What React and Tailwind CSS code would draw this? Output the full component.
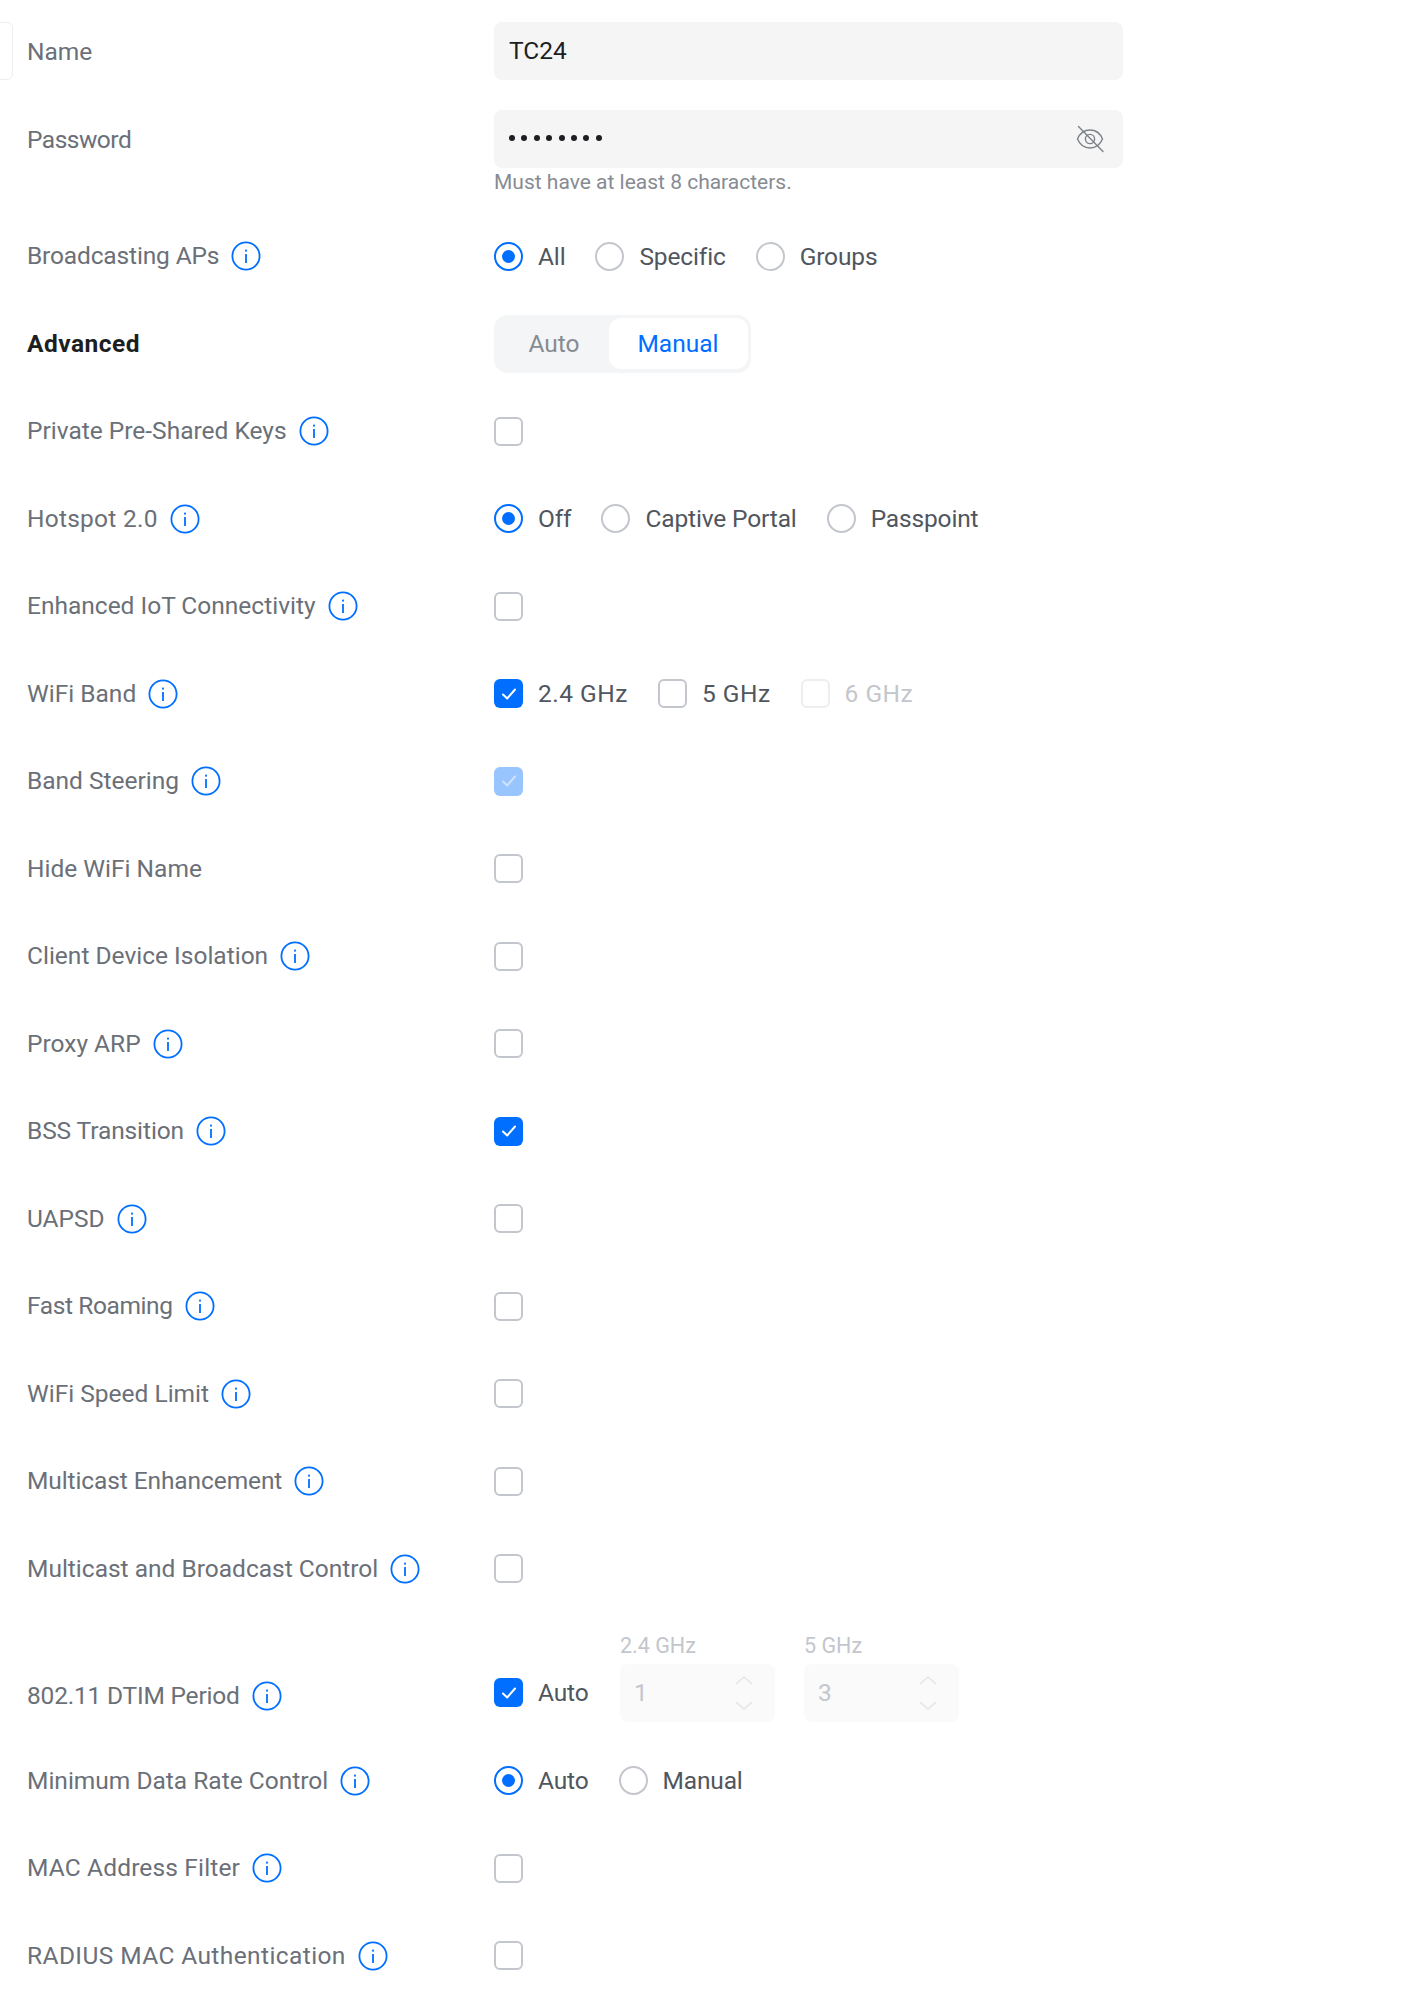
const labelFont = "font-['Roboto','Noto_Sans',sans-serif]";

const InfoIcon = () => (
  <svg width="30" height="30" viewBox="0 0 30 30" fill="none" className="shrink-0">
    <circle cx="15" cy="15" r="13.6" stroke="#006fff" strokeWidth="1.8" />
    <rect x="14.1" y="13" width="1.8" height="9" fill="#006fff" />
    <rect x="14.1" y="8.6" width="1.8" height="2" fill="#006fff" />
  </svg>
);

const EyeSlash = () => (
  <svg width="30" height="30" viewBox="0 0 30 30" fill="none">
    <path d="M2.5 15 C5 9 9.5 6 15 6 C20.5 6 25 9 27.5 15 C25 21 20.5 24 15 24 C9.5 24 5 21 2.5 15 Z" stroke="#7d8288" strokeWidth="1.4" />
    <circle cx="15" cy="15" r="4.6" stroke="#7d8288" strokeWidth="1.4" />
    <path d="M3.5 2.5 L28 27.5" stroke="#7d8288" strokeWidth="1.4" strokeLinecap="round" />
  </svg>
);

const Check = ({ className }) => (
  <svg width="16" height="14" viewBox="0 0 16 14" fill="none" className={className}>
    <path d="M2 7.5 L6.2 11.5 L14 2.5" stroke="currentColor" strokeWidth="2" strokeLinecap="round" strokeLinejoin="round" />
  </svg>
);

const Checkbox = ({ state = 'off' }) => {
  if (state === 'on') {
    return (
      <span className="flex h-[29px] w-[29px] shrink-0 items-center justify-center rounded-[6px] bg-[#006fff] text-white">
        <Check />
      </span>
    );
  }
  if (state === 'onDisabled') {
    return (
      <span className="flex h-[29px] w-[29px] shrink-0 items-center justify-center rounded-[6px] bg-[#99c5ff] text-[#cfe2ff]">
        <Check />
      </span>
    );
  }
  return (
    <span className={`block h-[29px] w-[29px] shrink-0 rounded-[6px] border-2 ${state === 'disabled' ? 'border-[#eceef0]' : 'border-[#c3c6cc]'}`} />
  );
};

const Radio = ({ on }) =>
  on ? (
    <span className="flex h-[29px] w-[29px] shrink-0 items-center justify-center rounded-full border-2 border-[#006fff]">
      <span className="h-[13px] w-[13px] rounded-full bg-[#006fff]" />
    </span>
  ) : (
    <span className="block h-[29px] w-[29px] shrink-0 rounded-full border-2 border-[#c3c6cc]" />
  );

const Option = ({ control, text, muted, wide }) => (
  <div className="flex items-center gap-[15px]">
    {control}
    <span className={`pt-[1px] ${wide ? 'tracking-[0.5px]' : 'tracking-[-0.15px]'} ${muted ? 'text-[#c3c6cc]' : 'text-[#50565e]'}`}>{text}</span>
  </div>
);

const RadioGroup = ({ options }) => (
  <div className="flex items-center gap-[30px]">
    {options.map((o, i) => (
      <Option key={o} control={<Radio on={i === 0} />} text={o} />
    ))}
  </div>
);

// labelClass nudges single labels, the original font is not installed
const Row = ({ label, info = true, children, bold, labelClass = '' }) => (
  <div className="flex h-[58px] items-center">
    <div className={`flex w-[494px] shrink-0 items-center gap-[12px] pl-[27px] ${bold ? 'font-bold tracking-[0.5px] text-[#1c1e21]' : 'text-[#6b7078]'}`}>
      <span className={labelClass}>{label}</span>
      {info && <InfoIcon />}
    </div>
    {children}
  </div>
);

const Stepper = ({ label, value }) => (
  <div className="flex w-[155px] flex-col">
    <span className="mb-[4px] text-[21.5px] leading-[28px] text-[#c3c6cc]">{label}</span>
    <div className="flex h-[58px] items-center justify-between rounded-[8px] bg-[#fafafa] pl-[14px] pr-[22px] text-[#c3c6cc]">
      <span>{value}</span>
      <div className="flex flex-col gap-[16px]">
        <svg width="18" height="9" viewBox="0 0 18 9" fill="none"><path d="M1 8 L9 1 L17 8" stroke="#e3e5e8" strokeWidth="1.4" /></svg>
        <svg width="18" height="9" viewBox="0 0 18 9" fill="none"><path d="M1 1 L9 8 L17 1" stroke="#e3e5e8" strokeWidth="1.4" /></svg>
      </div>
    </div>
  </div>
);

const Field = ({ children, className }) => (
  <div className={`flex h-[58px] w-[629px] items-center rounded-[8px] bg-[#f5f5f5] text-[#1c1e21] ${className}`}>{children}</div>
);

export default function App() {
  return (
    <div className={`relative h-[2000px] w-[1401px] overflow-hidden bg-white pt-[22px] text-[24.5px] leading-[32px] ${labelFont}`}>
      <div className="absolute left-[-10px] top-[22px] h-[58px] w-[23px] rounded-[6px] border border-[#eceef0]" />

      <Row label="Name" info={false} labelClass="pt-[1px]">
        <Field className="px-[15px]">TC24</Field>
      </Row>

      <div className="mt-[29.5px]">
        <Row label="Password" info={false} labelClass="pt-[3px] tracking-[-0.5px]">
          <Field className="justify-between pl-[15px] pr-[18px]">
            <span className="flex gap-[6.4px] pb-[2px]">
              {[0, 1, 2, 3, 4, 5, 6, 7].map((i) => (
                <span key={i} className="h-[6px] w-[6px] rounded-full bg-[#1c1e21]" />
              ))}
            </span>
            <EyeSlash />
          </Field>
        </Row>
        <div className="ml-[494px] text-[21px] leading-[28px] text-[#878b92]">Must have at least 8 characters.</div>
      </div>

      <div className="mt-[31.5px] flex flex-col gap-[29.5px]">
        <Row label="Broadcasting APs" labelClass="tracking-[-0.15px]">
          <RadioGroup options={['All', 'Specific', 'Groups']} />
        </Row>

        <Row label="Advanced" info={false} bold>
          <div className="flex h-[58px] w-[257px] rounded-[14px] bg-[#f4f5f6] p-[3.5px]">
            <span className="flex w-[111px] items-center justify-center pl-[2px] text-[#878b92]">Auto</span>
            <span className="flex flex-1 items-center justify-center rounded-[12px] bg-white text-[#006fff]">Manual</span>
          </div>
        </Row>

        <Row label="Private Pre-Shared Keys">
          <Checkbox />
        </Row>

        <Row label="Hotspot 2.0" labelClass="tracking-[0.25px]">
          <RadioGroup options={['Off', 'Captive Portal', 'Passpoint']} />
        </Row>

        <Row label="Enhanced IoT Connectivity">
          <Checkbox />
        </Row>

        <Row label="WiFi Band">
          <div className="flex items-center gap-[30px]">
            <Option control={<Checkbox state="on" />} text="2.4 GHz" wide />
            <Option control={<Checkbox />} text="5 GHz" wide />
            <Option control={<Checkbox state="disabled" />} text="6 GHz" muted wide />
          </div>
        </Row>

        <Row label="Band Steering">
          <Checkbox state="onDisabled" />
        </Row>
        <Row label="Hide WiFi Name" info={false}>
          <Checkbox />
        </Row>
        <Row label="Client Device Isolation">
          <Checkbox />
        </Row>
        <Row label="Proxy ARP">
          <Checkbox />
        </Row>
        <Row label="BSS Transition" labelClass="tracking-[-0.1px]">
          <Checkbox state="on" />
        </Row>
        <Row label="UAPSD">
          <Checkbox />
        </Row>
        <Row label="Fast Roaming" labelClass="tracking-[-0.4px]">
          <Checkbox />
        </Row>
        <Row label="WiFi Speed Limit">
          <Checkbox />
        </Row>
        <Row label="Multicast Enhancement" labelClass="tracking-[-0.1px]">
          <Checkbox />
        </Row>
        <Row label="Multicast and Broadcast Control">
          <Checkbox />
        </Row>
      </div>

      <div className="mt-[29px] flex h-[95px] items-end">
        <div className="flex h-[58px] w-[494px] shrink-0 items-center gap-[12px] pl-[27px] pt-[6px] text-[#6b7078]">
          <span className="tracking-[-0.2px]">802.11 DTIM Period</span>
          <InfoIcon />
        </div>
        <div className="flex h-[58px] w-[126px] items-center">
          <Option control={<Checkbox state="on" />} text="Auto" />
        </div>
        <div className="flex gap-[29px]">
          <Stepper label="2.4 GHz" value="1" />
          <Stepper label="5 GHz" value="3" />
        </div>
      </div>

      <div className="mt-[30px] flex flex-col gap-[29.5px]">
        <Row label="Minimum Data Rate Control">
          <RadioGroup options={['Auto', 'Manual']} />
        </Row>
        <Row label="MAC Address Filter" labelClass="tracking-[0.15px]">
          <Checkbox />
        </Row>
        <Row label="RADIUS MAC Authentication" labelClass="tracking-[0.4px]">
          <Checkbox />
        </Row>
      </div>
    </div>
  );
}
